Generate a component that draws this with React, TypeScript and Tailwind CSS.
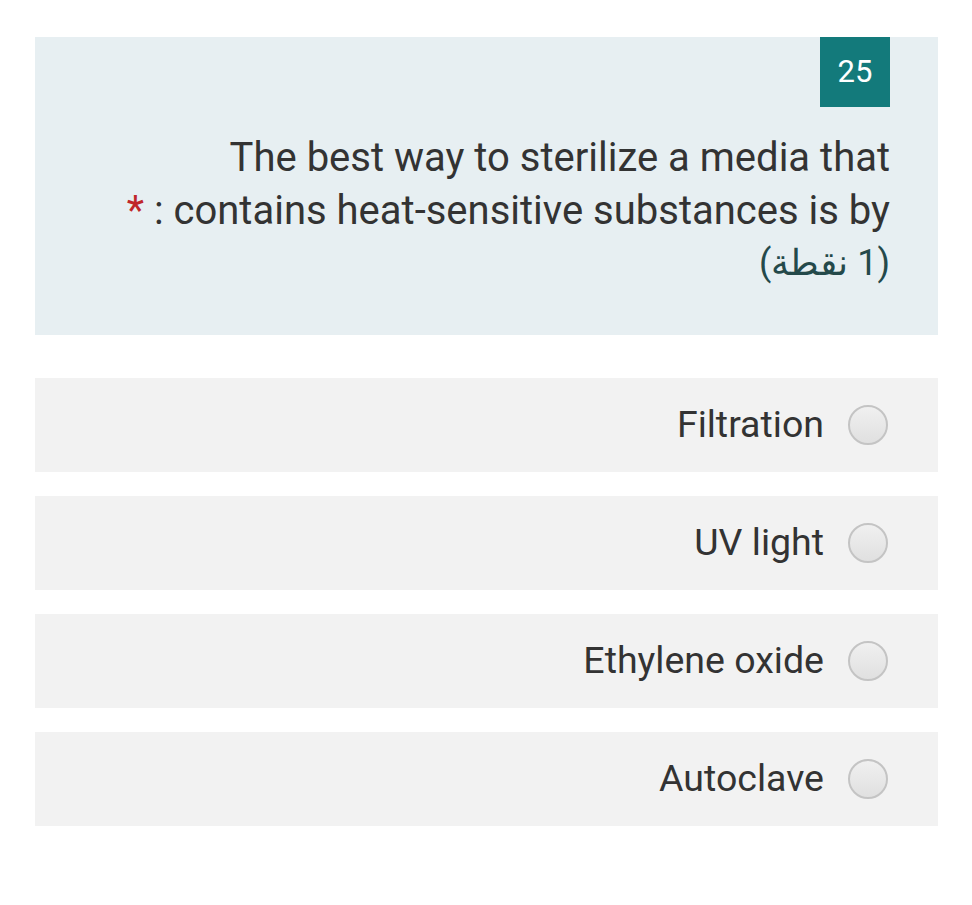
import React from "react";

const options = ["Filtration", "UV light", "Ethylene oxide", "Autoclave"];

export default function App() {
  return (
    <div className="min-h-[905px] w-[972px] bg-white pt-[37px] pl-[35px] pr-[34px]" style={{ fontFamily: "Roboto, 'Noto Sans', sans-serif" }}>
      <div className="bg-[#e7eff2] pr-[48px] pb-[45px] flex flex-col items-end">
        <div className="w-[70px] h-[70px] bg-[#137a7b] text-white text-[31px] flex items-center justify-center">25</div>
        <div className="mt-[24px] text-right text-[40px] leading-[53px] text-[#333]">
          <div>The best way to sterilize a media that</div>
          <div>
            <span className="text-[#c0262a]">*</span> : contains heat-sensitive substances is by
          </div>
          <div className="text-[#24494a] text-[36px]" dir="rtl">(1 نقطة)</div>
        </div>
      </div>
      <div className="mt-[43px] flex flex-col gap-[24px]">
        {options.map((o) => (
          <div key={o} className="h-[94px] bg-[#f2f2f2] flex items-center justify-end pr-[50px] gap-[24px]">
            <span className="text-[37.5px] text-[#333] leading-none">{o}</span>
            <span className="w-[40px] h-[40px] rounded-full border-2 border-[#c4c4c4] bg-gradient-to-b from-[#f0f0f0] to-[#e0e0e0]" />
          </div>
        ))}
      </div>
    </div>
  );
}
